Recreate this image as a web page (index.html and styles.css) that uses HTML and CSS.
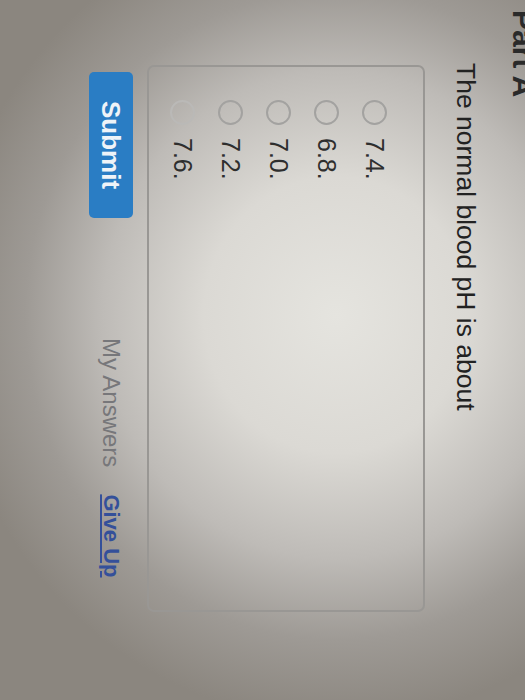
FILE: index.html
```html
<!DOCTYPE html>
<html lang="en">
<head>
<meta charset="utf-8">
<title>Part A</title>
<link rel="stylesheet" href="styles.css">
</head>
<body>
<div class="stage">
  <h2 class="part">Part A</h2>
  <p class="question">The normal blood pH is about</p>
  <div class="answers">
    <label class="opt"><span class="radio"></span><span class="val">7.4.</span></label>
    <label class="opt"><span class="radio"></span><span class="val">6.8.</span></label>
    <label class="opt"><span class="radio"></span><span class="val">7.0.</span></label>
    <label class="opt"><span class="radio"></span><span class="val">7.2.</span></label>
    <label class="opt"><span class="radio faint"></span><span class="val">7.6.</span></label>
  </div>
  <div class="actions">
    <button class="submit" type="button">Submit</button>
    <div class="links">
      <span class="my">My Answers</span>
      <a class="giveup" href="#">Give Up</a>
    </div>
  </div>
</div>
</body>
</html>
```
FILE: styles.css
```css
html, body {
  margin: 0;
  padding: 0;
  width: 525px;
  height: 700px;
  overflow: hidden;
}
body {
  background: radial-gradient(ellipse 74% 58% at 64% 45%, #e5e4df 0%, #dbd9d4 34%, #bebbb7 60%, #9e9a95 80%, #8b867f 100%);
  font-family: "Liberation Sans", Arial, sans-serif;
}
.stage {
  display: flow-root;
  width: 700px;
  height: 525px;
  transform-origin: 0 0;
  transform: translateX(525px) rotate(90deg);
  color: #2b2b2b;
}
.part {
  margin: -13px 0 0 10px;
  font-size: 30px;
  line-height: 30px;
  font-weight: bold;
  color: #2a2a2a;
}
.question {
  margin: 27px 0 0 63px;
  font-size: 26.5px;
  line-height: 30px;
  color: #222;
}
.answers {
  margin: 26px 0 0 65px;
  width: 547px;
  height: 278px;
  box-sizing: border-box;
  border: 2px solid #999794;
  border-radius: 7px;
  padding: 24px 0 0 33px;
  display: flex;
  flex-direction: column;
}
.opt {
  display: flex;
  align-items: center;
  height: 48px;
}
.radio {
  width: 25px;
  height: 25px;
  box-sizing: border-box;
  border: 2px solid #a3a2a0;
  border-radius: 50%;
  margin-right: 13px;
}
.radio.faint {
  border-color: #bab9b7;
}
.val {
  font-size: 25px;
  color: #2e2e2e;
}
.actions {
  display: flex;
  align-items: center;
  margin: 14px 0 0 72px;
}
.submit {
  width: 146px;
  height: 44px;
  border: 0;
  border-radius: 5px;
  background: #2a7dc4;
  color: #eef3f8;
  font-family: "Liberation Sans", Arial, sans-serif;
  font-weight: bold;
  font-size: 26px;
  padding: 0;
}
.links {
  display: flex;
  align-items: center;
  margin-left: 120px;
  gap: 27px;
}
.my {
  font-size: 24px;
  color: #77777a;
}
.giveup {
  font-size: 22px;
  font-weight: bold;
  color: #34509a;
  text-decoration: underline;
}
```
